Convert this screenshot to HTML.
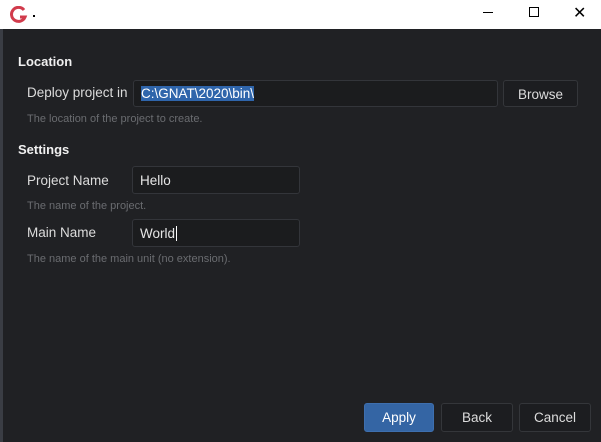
<!DOCTYPE html><html><head><style>
body{margin:0;width:601px;height:442px;background:#202124;font-family:"Liberation Sans","DejaVu Sans",sans-serif;position:relative;overflow:hidden;color:#dcdcdc}
.a{position:absolute}
.t{background:#fff;left:0;top:0;width:601px;height:29px}
.in{position:absolute;background:#1b1c1e;border:1px solid #33353a;border-radius:3px;box-sizing:border-box;font-size:13.5px;line-height:26px;padding-left:7px;color:#e6e6e6}
.btn{position:absolute;border:1px solid #34363a;border-radius:3px;box-sizing:border-box;background:#1c1d20;font-size:13.5px;text-align:center;line-height:27px;color:#dcdcdc}
.h{font-weight:bold;font-size:13px;color:#f0f0f0}
.l{font-size:13.5px;color:#dcdcdc}
.s{font-size:11px;color:#6a6c70}
</style></head><body>
<div class="a" style="left:0;top:29px;width:3px;height:413px;background:#3a3d44"></div>
<div class="a t"></div>
<svg class="a" style="left:10px;top:6px" width="18" height="18" viewBox="0 0 18 18"><path d="M14 4 A7 7 0 1 0 15 11 L10 11" fill="none" stroke="#d13b4c" stroke-width="3"/></svg>
<div class="a" style="left:33px;top:15px;width:2px;height:2px;background:#000"></div>
<div class="a" style="left:483px;top:12px;width:10px;height:1px;background:#000"></div>
<div class="a" style="left:529px;top:7px;width:8px;height:8px;border:1px solid #000"></div>
<div class="a" style="left:573px;top:3px;font-size:16px;color:#000">✕</div>
<div class="a h" style="left:18px;top:54px">Location</div>
<div class="a l" style="left:27px;top:85px">Deploy project in</div>
<div class="in" style="left:133px;top:80px;width:365px;height:27px"><span style="background:#2f65ab;color:#fff">C:\GNAT\2020\bin\</span></div>
<div class="btn" style="left:503px;top:80px;width:75px;height:27px">Browse</div>
<div class="a s" style="left:27px;top:113px">The location of the project to create.</div>
<div class="a h" style="left:18px;top:142px">Settings</div>
<div class="a l" style="left:27px;top:173px">Project Name</div>
<div class="in" style="left:132px;top:166px;width:168px;height:28px;line-height:28px">Hello</div>
<div class="a s" style="left:27px;top:200px">The name of the project.</div>
<div class="a l" style="left:27px;top:225px">Main Name</div>
<div class="in" style="left:132px;top:219px;width:168px;height:28px;line-height:28px">World<span style="border-left:1px solid #fff;margin-left:1px"></span></div>
<div class="a s" style="left:27px;top:253px">The name of the main unit (no extension).</div>
<div class="btn" style="left:364px;top:403px;width:70px;height:29px;background:#3465a4;border-color:#3e6fae;color:#fff">Apply</div>
<div class="btn" style="left:441px;top:403px;width:72px;height:29px">Back</div>
<div class="btn" style="left:519px;top:403px;width:72px;height:29px">Cancel</div>
</body></html>
